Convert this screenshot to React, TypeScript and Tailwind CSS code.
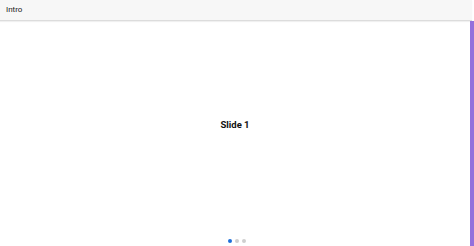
import { useState } from "react";

const slides = ["Slide 1", "Slide 2", "Slide 3"];

export default function App() {
  const [active, setActive] = useState(0);

  return (
    <div className="relative flex h-[246px] w-[474px] flex-col overflow-hidden bg-white font-['Roboto',sans-serif]">
      <header className="flex h-[21px] w-[472px] shrink-0 items-center border-b border-[#dcdcdc] bg-[#f7f7f7] px-[6px] shadow-[0_1px_1px_rgba(0,0,0,0.06)]">
        <span className="text-[8px] text-[#222]">Intro</span>
      </header>
      <div className="flex min-h-0 flex-1">
        <main className="flex flex-1 items-center justify-center pb-[16px]">
          <h1 className="text-[9.5px] font-bold text-[#111]">{slides[active]}</h1>
        </main>
        <div className="w-[4px] shrink-0 bg-[#9470dc]" />
      </div>
      <div className="absolute bottom-[3px] left-0 right-0 flex justify-center gap-[3px]">
        {slides.map((s, i) => (
          <button
            key={s}
            onClick={() => setActive(i)}
            className={
              i === active
                ? "h-[4px] w-[4px] rounded-full bg-[#1e6fd9]"
                : "h-[4px] w-[4px] rounded-full bg-[#cfcfcf]"
            }
          />
        ))}
      </div>
    </div>
  );
}
